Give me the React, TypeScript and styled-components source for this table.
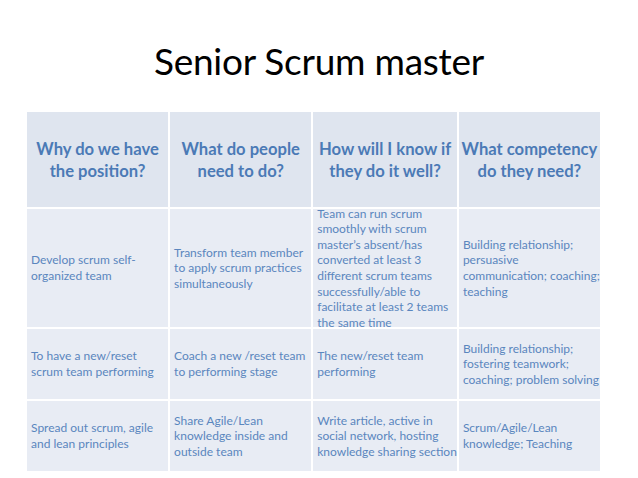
import React from "react";
import styled, { createGlobalStyle } from "styled-components";

const Global = createGlobalStyle`
  html, body { margin: 0; padding: 0; background: #ffffff; }
  #root { width: 638px; height: 478px; }
`;

const Page = styled.div`
  width: 638px;
  height: 478px;
  background: #ffffff;
  display: flex;
  flex-direction: column;
  font-family: Lato, "Open Sans", sans-serif;
`;

const TitleBar = styled.div`
  height: 112px;
  box-sizing: border-box;
  padding-top: 8px;
  display: flex;
  align-items: center;
  justify-content: center;
`;

const Title = styled.h1`
  margin: 0;
  font-family: Lato, "Open Sans", sans-serif;
  font-weight: 400;
  font-size: 37px;
  color: #000000;
  letter-spacing: -0.25px;
  line-height: 1;
`;

const Table = styled.div`
  margin-left: 27px;
  width: 573px;
  display: grid;
  grid-template-columns: repeat(4, 1fr);
  grid-template-rows: 95px 118px 70px 70px;
  gap: 2px;
  background: #ffffff;
`;

const HeadCell = styled.div`
  background: #dfe5ef;
  display: flex;
  align-items: center;
  justify-content: center;
  text-align: center;
  color: #4b7ab6;
  font-weight: 700;
  font-size: 16.6px;
  line-height: 22px;
  white-space: nowrap;
`;

const Cell = styled.div`
  background: #e8ecf4;
  display: flex;
  flex-direction: column;
  justify-content: center;
  padding-left: 4px;
  color: #5a86be;
  font-size: 12px;
  line-height: 15.6px;
  white-space: nowrap;
`;

const Line = styled.span`
  display: block;
`;

const headers = [
  ["Why do we have", "the position?"],
  ["What do people", "need to do?"],
  ["How will I know if", "they do it well?"],
  ["What competency", "do they need?"],
];

const rows: string[][][] = [
  [
    ["Develop scrum self-", "organized team"],
    ["Transform team member", "to apply scrum practices", "simultaneously"],
    [
      "Team can run scrum",
      "smoothly with scrum",
      "master\u2019s absent/has",
      "converted at least 3",
      "different scrum teams",
      "successfully/able to",
      "facilitate at least 2 teams",
      "the same time",
    ],
    ["Building relationship;", "persuasive", "communication; coaching;", "teaching"],
  ],
  [
    ["To have a new/reset", "scrum team performing"],
    ["Coach a new /reset team", "to performing stage"],
    ["The new/reset team", "performing"],
    ["Building relationship;", "fostering teamwork;", "coaching; problem solving"],
  ],
  [
    ["Spread out scrum, agile", "and lean principles"],
    ["Share Agile/Lean", "knowledge inside and", "outside team"],
    ["Write article, active in", "social network, hosting", "knowledge sharing section"],
    ["Scrum/Agile/Lean", "knowledge; Teaching"],
  ],
];

export default function App() {
  return (
    <>
      <Global />
      <Page>
        <TitleBar>
          <Title>Senior Scrum master</Title>
        </TitleBar>
        <Table>
          {headers.map((h, i) => (
            <HeadCell key={"h" + i}>
              <div>
                {h.map((l, j) => (
                  <Line key={j}>{l}</Line>
                ))}
              </div>
            </HeadCell>
          ))}
          {rows.map((r, ri) =>
            r.map((c, ci) => (
              <Cell key={ri + "-" + ci}>
                {c.map((l, j) => (
                  <Line key={j}>{l}</Line>
                ))}
              </Cell>
            ))
          )}
        </Table>
      </Page>
    </>
  );
}
